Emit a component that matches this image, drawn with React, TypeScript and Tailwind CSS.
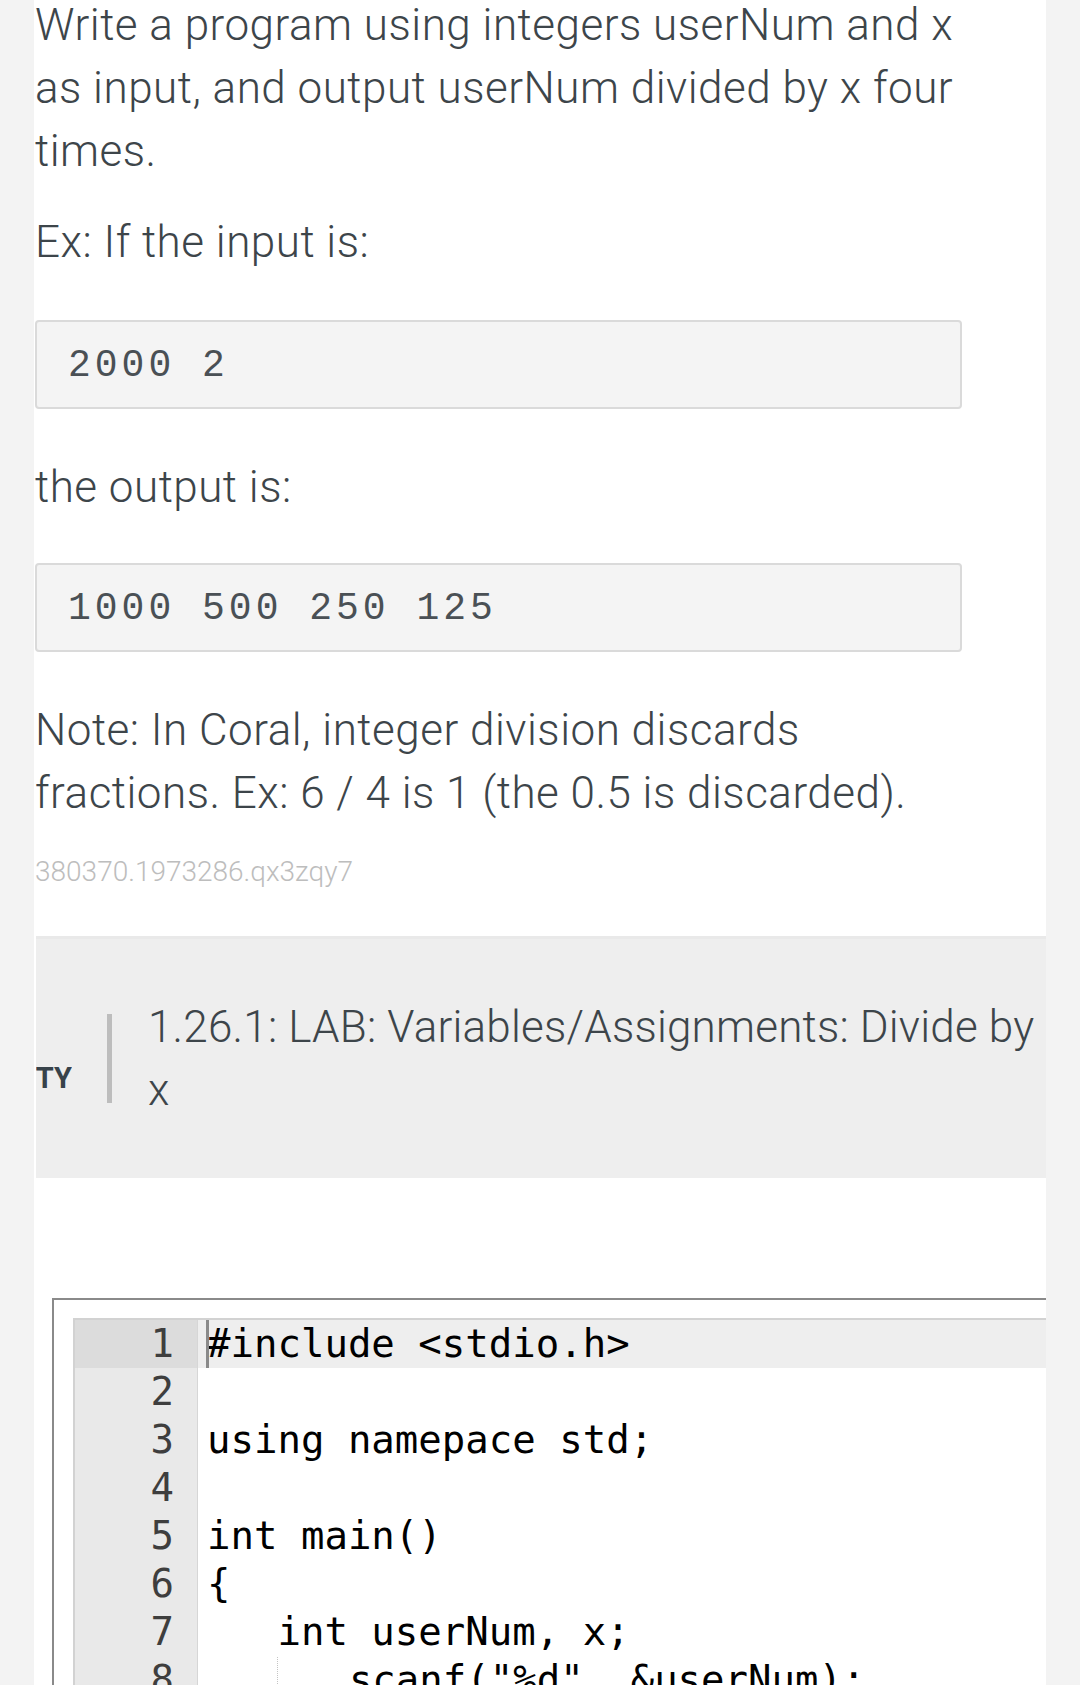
import React from 'react';

const prose = "font-['Roboto',sans-serif] font-light text-[44px] leading-[63px] text-[#3d454a]";

function ExampleBox({ text }: { text: string }) {
  return (
    <div className="mr-[9px] h-[89px] rounded-[4px] border-2 border-[#dadada] bg-[#f4f4f4] pl-[31px] pt-[21px]">
      <pre className="font-['Liberation_Mono',monospace] text-[38px] leading-[45px] tracking-[4px] text-[#4a5055]">{text}</pre>
    </div>
  );
}

const code: { n: number; text: React.ReactNode }[] = [
  { n: 1, text: '#include <stdio.h>' },
  { n: 2, text: '' },
  { n: 3, text: 'using namepace std;' },
  { n: 4, text: '' },
  { n: 5, text: 'int main()' },
  { n: 6, text: '{' },
  { n: 7, text: '   int userNum, x;' },
  {
    n: 8,
    text: (
      <>
        {'   '}
        <span className="border-l border-dotted border-[#c4c4c4]">{'   scanf("%d", &userNum);'}</span>
      </>
    ),
  },
  { n: 9, text: '   scanf("%d", &x);' },
  { n: 10, text: '' },
];

export default function App() {
  return (
    <div className="flex min-h-screen bg-[#f3f3f3]">
      <div className="w-[34px] shrink-0" />
      <main className="w-[1012px] shrink-0 overflow-hidden bg-white">
        <section className="pl-[1px] pr-[75px] pb-[43px]">
          <p className={`${prose} mt-[-6px] tracking-[0.5px]`}>
            Write a program using integers userNum and x as input, and output userNum divided by x four times.
          </p>
          <p className={`${prose} mt-[28px] tracking-[0.5px]`}>Ex: If the input is:</p>
          <div className="mt-[46px]">
            <ExampleBox text="2000 2" />
          </div>
          <p className={`${prose} mt-[47px] tracking-[0.5px]`}>the output is:</p>
          <div className="mt-[44px]">
            <ExampleBox text="1000 500 250 125" />
          </div>
          <p className={`${prose} mt-[47px] tracking-[0.5px]`}>
            Note: In Coral, integer division discards fractions. Ex: 6 / 4 is 1 (the 0.5 is discarded).
          </p>
          <p className="mt-[26px] font-['Roboto',sans-serif] font-light text-[28px] leading-[42px] text-[#bdbdbd]">
            380370.1973286.qx3zqy7
          </p>
        </section>

        <div className="ml-[2px] border-t-[3px] border-[#e9e9e9]">
          <div className="flex h-[239px] items-center overflow-hidden bg-[#eeeeee]">
            <div className="mt-[38px] flex w-[36px] shrink-0 justify-end overflow-hidden">
              <span className="whitespace-nowrap font-['Roboto',sans-serif] text-[29px] font-bold leading-[42px] text-[#37424a]">
                ACTIVITY
              </span>
            </div>
            <div className="ml-[35px] h-[89px] w-[5px] shrink-0 bg-[#bdbdbd]" />
            <h2 className={`${prose} ml-[36px] mr-[-12px] flex-1 tracking-[0.2px]`}>
              1.26.1: LAB: Variables/Assignments: Divide by x
            </h2>
          </div>
        </div>

        <div className="ml-[18px] mt-[120px] w-[1200px] border-l-2 border-t-2 border-[#8a8a8a] pl-[19px] pt-[18px]">
          <div className="border-2 border-[#d2d2d2] font-['DejaVu_Sans_Mono',monospace] text-[39px] leading-[48px]">
            {code.map((row) => (
              <div key={row.n} className="flex">
                <div
                  className={`w-[123px] shrink-0 border-r border-[#d6d6d6] pr-[23px] text-right text-[#3e3e3e] ${
                    row.n === 1 ? 'bg-[#dcdcdc]' : 'bg-[#e9e9e9]'
                  }`}
                >
                  {row.n}
                </div>
                <div
                  className={`relative flex-1 whitespace-pre pl-[9px] text-black ${row.n === 1 ? 'bg-[#eeeeee]' : 'bg-white'}`}
                >
                  {row.n === 1 && <span className="absolute left-[8px] top-0 h-full w-[3px] bg-[#8a8a8a]" />}
                  {row.text || ' '}
                </div>
              </div>
            ))}
          </div>
        </div>
      </main>
      <div className="flex-1" />
    </div>
  );
}
